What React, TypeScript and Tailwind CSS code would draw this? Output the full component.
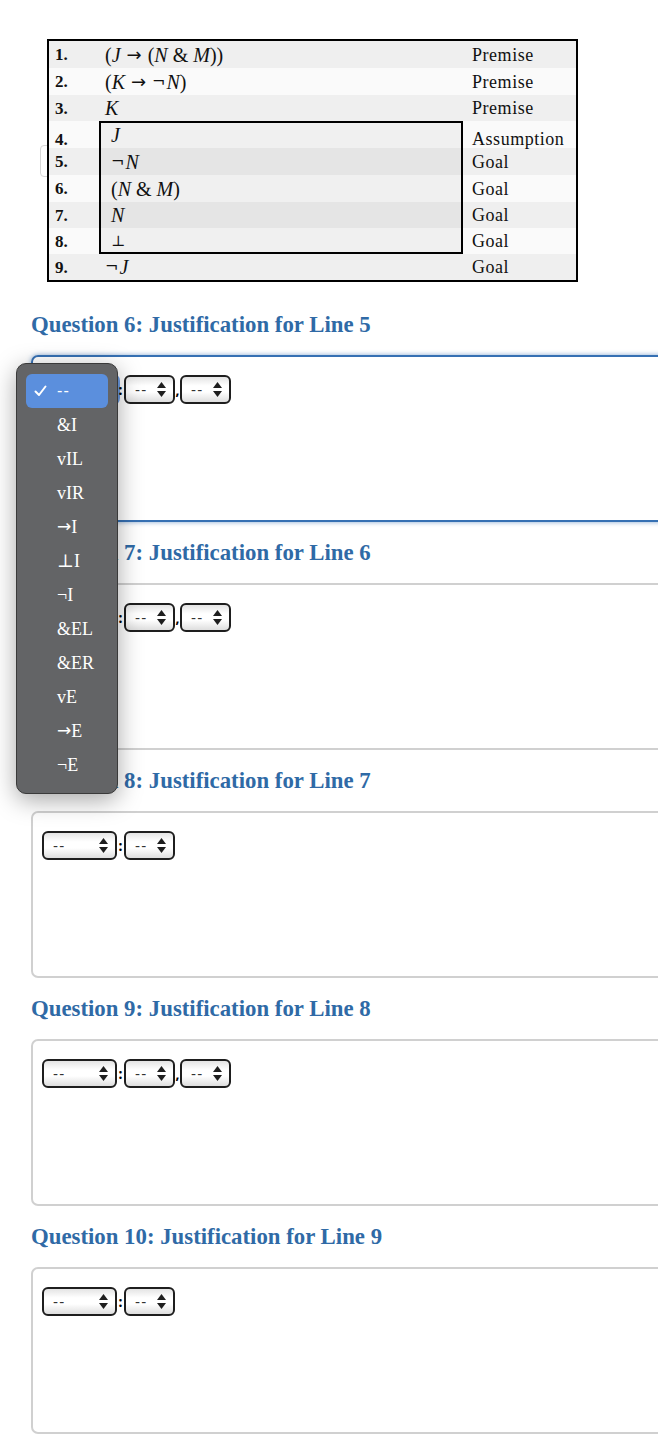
import React from 'react';

const Ar = () => <span className="mx-[6px]" style={{ fontFamily: '"DejaVu Sans", sans-serif', fontSize: '18px' }}>→</span>;
const Amp = () => <span className="mx-[5px] not-italic">&amp;</span>;
const Neg = () => <span className="mr-[1px]" style={{ fontFamily: '"DejaVu Serif", serif', fontSize: '16px' }}>¬</span>;

const rows = [
  { n: '1.', f: <>(<i>J</i><Ar />(<i>N</i><Amp /><i>M</i>))</>, j: 'Premise', h: 'h-[27px]' },
  { n: '2.', f: <>(<i>K</i><Ar /><Neg /><i>N</i>)</>, j: 'Premise', h: 'h-[27px]' },
  { n: '3.', f: <i>K</i>, j: 'Premise', h: 'h-[26px]' },
  { n: '4.', f: <i>J</i>, j: 'Assumption', h: 'h-[27px]', sub: true, low: true },
  { n: '5.', f: <><Neg /><i>N</i></>, j: 'Goal', h: 'h-[27px]', sub: true },
  { n: '6.', f: <>(<i>N</i><Amp /><i>M</i>)</>, j: 'Goal', h: 'h-[27px]', sub: true },
  { n: '7.', f: <i>N</i>, j: 'Goal', h: 'h-[26px]', sub: true },
  { n: '8.', f: <span style={{ fontFamily: '"DejaVu Serif", serif', fontSize: '15px' }}>⊥</span>, j: 'Goal', h: 'h-[26px]', sub: true },
  { n: '9.', f: <><Neg /><i>J</i></>, j: 'Goal', h: 'h-[26px]' },
];

const menuItems = ['&I', 'vIL', 'vIR', '→I', '⊥I', '¬I', '&EL', '&ER', 'vE', '→E', '¬E'];

function Arrows() {
  return (
    <svg width="9" height="15" viewBox="0 0 9 15" className="shrink-0">
      <path d="M4.5 0 L9 6 H0 Z" fill="#1e1e1e" />
      <path d="M0 9 H9 L4.5 15 Z" fill="#1e1e1e" />
    </svg>
  );
}

function Select({ wide, focus }: { wide?: boolean; focus?: boolean }) {
  return (
    <div
      className={
        'flex h-[29px] items-center justify-between rounded-[6px] border-2 border-[#1e1e1e] bg-[linear-gradient(#e4e4e4,#ffffff_35%,#ffffff_60%,#dedede)] pl-[9px] pr-[7px] ' +
        (wide ? 'w-[75px] ' : 'w-[51px] ') +
        (focus ? 'ring-[3px] ring-[#6b9ae0]' : '')
      }
    >
      <span className="text-[15px] leading-none tracking-[0.08em] text-[#333]" style={{ fontFamily: 'Arial, "Liberation Sans", sans-serif' }}>
        --
      </span>
      <Arrows />
    </div>
  );
}

function Question({ num, line, count, active }: { num: number; line: number; count: number; active?: boolean }) {
  return (
    <div className="mb-[17px]">
      <h2
        className="h-[28px] text-[22.8px] font-bold leading-[28px] text-[#2f6aa6]"
        style={{ fontFamily: '"Liberation Serif", serif' }}
      >
        Question {num}: Justification for Line {line}
      </h2>
      <div
        className={
          'mt-[16px] h-[167px] w-[700px] rounded-[7px] border-2 ' +
          (active
            ? 'border-[#3670b3] shadow-[0_0_5px_rgba(54,112,179,0.6)]'
            : 'border-[#d0d0d0]')
        }
      >
        <div className="flex items-center pl-[9px] pt-[18px]">
          <Select wide focus={active} />
          <span className="w-[7px] text-center text-[14px] font-bold leading-none text-black">:</span>
          <Select />
          {count > 2 && (
            <>
              <span className="w-[5px] text-center text-[14px] font-bold leading-none text-black">,</span>
              <Select />
            </>
          )}
        </div>
      </div>
    </div>
  );
}

export default function App() {
  return (
    <div className="relative min-h-[1448px] w-[658px] overflow-hidden bg-white">
      {/* proof table */}
      <div className="relative ml-[47px] mt-[39px] w-[531px]" style={{ fontFamily: '"Liberation Serif", "DejaVu Serif", serif' }}>
        <div className="absolute left-[-7px] top-[106px] h-[32px] w-[538px] rounded-[4px] border border-[#d6d6d6]" />
        <div className="relative border-2 border-black">
          {rows.map((r, i) => (
            <div
              key={r.n}
              className={'grid grid-cols-[50px_364px_1fr] items-center ' + r.h + ' ' + (i % 2 === 0 ? 'bg-[#efefef]' : 'bg-[#fafafa]')}
            >
              <div className={'pl-[6px] text-[17px] font-bold leading-none text-[#111] ' + (r.low ? 'pt-[9px]' : '')}>{r.n}</div>
              <div
                className={
                  'flex h-full items-center text-[20px] leading-none text-[#111] ' +
                  (r.sub ? 'bg-black/[0.04] pl-[12px]' : 'pl-[6px]')
                }
              >
                {r.f}
              </div>
              <div className={'pl-[9px] text-[18px] leading-none tracking-[0.03em] text-[#111] ' + (r.low ? 'pt-[9px]' : '')}>{r.j}</div>
            </div>
          ))}
          <div className="pointer-events-none absolute left-[50px] top-[80px] h-[133px] w-[364px] border-2 border-black" />
        </div>
      </div>

      {/* questions */}
      <div className="ml-[31px] mt-[29px]">
        <Question num={6} line={5} count={3} active />
        <Question num={7} line={6} count={3} />
        <Question num={8} line={7} count={2} />
        <Question num={9} line={8} count={3} />
        <Question num={10} line={9} count={2} />
      </div>

      {/* open select menu */}
      <div
        className="absolute left-[16px] top-[363px] w-[102px] rounded-[10px] border border-[#3a3a3a] bg-[#636466] px-[9px] pb-[11px] pt-[10px] shadow-[0_6px_24px_rgba(0,0,0,0.35)]"
        style={{ fontFamily: '"Liberation Serif", "DejaVu Serif", serif' }}
      >
        <div className="flex h-[34px] items-center rounded-[6px] bg-[#5b8fdd] text-white">
          <svg width="13" height="12" viewBox="0 0 13 12" className="ml-[8px]">
            <path d="M1.5 6.5 L5 10 L11.5 1.5" stroke="white" strokeWidth="2" fill="none" strokeLinecap="round" strokeLinejoin="round" />
          </svg>
          <span className="ml-[10px] text-[16px] leading-none tracking-[0.08em]" style={{ fontFamily: 'Arial, "Liberation Sans", sans-serif' }}>--</span>
        </div>
        {menuItems.map((m) => (
          <div key={m} className="flex h-[34px] items-center pl-[31px] text-[18px] text-white">
            {m.startsWith('→') ? (
              <>
                <span style={{ fontFamily: '"DejaVu Sans", sans-serif', fontSize: '17px' }}>→</span>
                {m.slice(1)}
              </>
            ) : (
              m
            )}
          </div>
        ))}
      </div>
    </div>
  );
}
